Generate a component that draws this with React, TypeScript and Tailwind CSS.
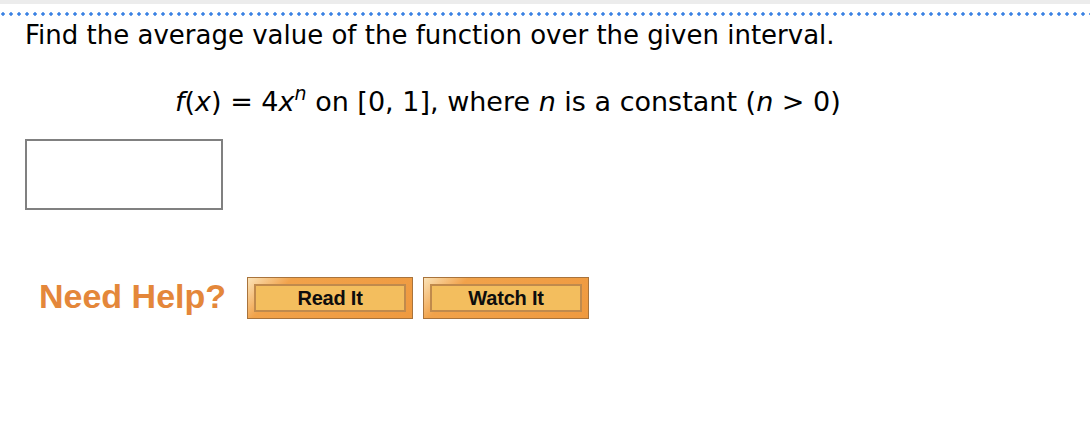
import React from 'react';

function HelpButton({ label }: { label: string }) {
  return (
    <button className="w-[166px] h-[42px] border border-[#a8733c] bg-[linear-gradient(135deg,#fbe3b8_0%,#f1a24a_22%,#ef9a40_100%)] p-[6px] cursor-pointer">
      <span className="flex h-full w-full items-center justify-center border-2 border-[#c08a4c] bg-[#f3be5e] font-['Liberation_Sans',Arial,sans-serif] text-[20px] font-bold text-[#0d0d0d] tracking-[-0.2px]">
        {label}
      </span>
    </button>
  );
}

export default function App() {
  return (
    <div className="w-[1090px] h-[430px] bg-white font-['DejaVu_Sans',Verdana,sans-serif] text-black">
      {/* top band + dotted rule */}
      <div className="h-[4px] bg-[#ececec]" />
      <div className="mt-[8px] h-[4px] bg-[radial-gradient(circle,#3b82e3_1.5px,transparent_1.8px)] bg-[length:8px_4px] bg-[position:-1px_0]" />

      <p className="pl-[25px] mt-[3px] text-[26px] leading-[32px]">
        Find the average value of the function over the given interval.
      </p>

      <p className="pl-[175px] mt-[35px] text-[27px] leading-[32px]">
        <i>f</i>(<i>x</i>) = 4<i>x</i>
        <sup className="text-[19px] top-[-0.6em]"><i>n</i></sup> on [0, 1], where <i>n</i> is a constant (<i>n</i> &gt; 0)
      </p>

      <div className="ml-[25px] mt-[21px] w-[198px] h-[71px] border-2 border-[#808080] bg-white" />

      <div className="mt-[63px] ml-[39px] flex items-center">
        <span className="font-['Liberation_Sans',Arial,sans-serif] text-[34px] font-bold text-[#e4873a] mr-[21px] mt-[-2px]">
          Need Help?
        </span>
        <div className="flex gap-[10px]">
          <HelpButton label="Read It" />
          <HelpButton label="Watch It" />
        </div>
      </div>
    </div>
  );
}
